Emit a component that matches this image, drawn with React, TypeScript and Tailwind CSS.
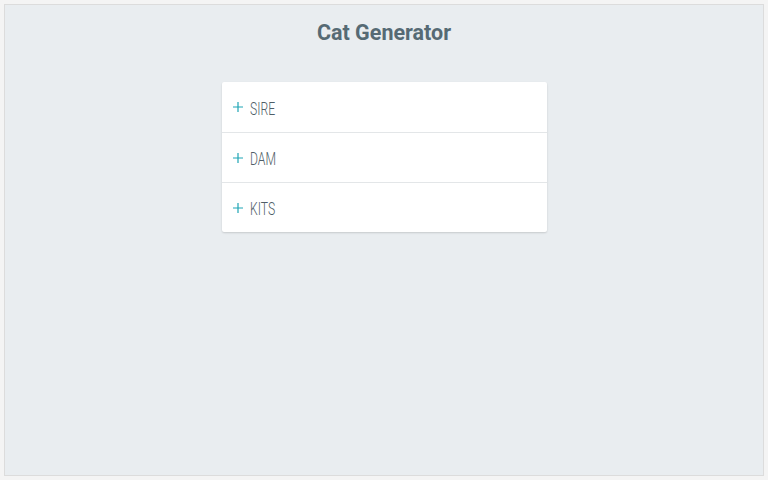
export default function App() {
  const sections = ['SIRE', 'DAM', 'KITS']

  return (
    <div className="h-[480px] bg-[#f4f4f4] p-1">
      <div className="h-full border border-[#dcdcdc] bg-[#e9edf0]">
        <h1 className="pt-[13px] text-center text-[21.5px] font-bold leading-[30px] text-[#566a74] [font-family:Roboto,sans-serif]">
          Cat Generator
        </h1>

        <div className="mx-auto mt-[34px] w-[325px] rounded-[2px] bg-white shadow-[0_1px_2px_rgba(0,0,0,0.15)]">
          {sections.map((label, i) => (
            <div
              key={label}
              className={`flex h-[50px] items-center pl-[11px] ${
                i > 0 ? 'border-t border-[#e3e6e8]' : ''
              }`}
            >
              <svg width="10" height="10" viewBox="0 0 10 10" className="shrink-0 text-[#1fa5b5]">
                <path d="M5 0V10M0 5H10" stroke="currentColor" strokeWidth="1.2" />
              </svg>
              <span className="ml-[7px] mt-[2px] inline-block origin-left scale-x-[0.64] text-[19px] font-light leading-none text-[#4f5e67] [font-family:Roboto,sans-serif]">
                {label}
              </span>
            </div>
          ))}
        </div>
      </div>
    </div>
  )
}
